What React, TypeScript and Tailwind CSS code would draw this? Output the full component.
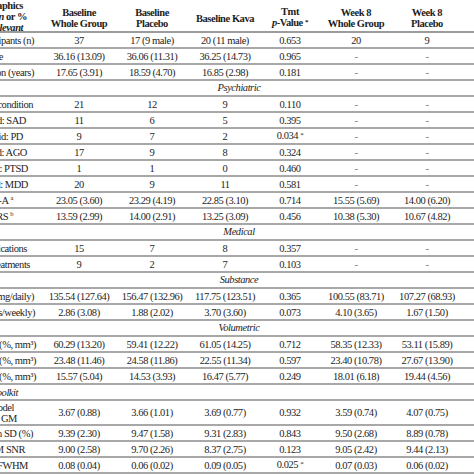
import React from "react";

type Row =
  | { kind: "data"; label: string; sup?: string; end: number; v: string[]; tall?: boolean; label2?: string; end2?: number }
  | { kind: "section"; title: string }
  | { kind: "leftsection"; title: string; end: number };

const rows: Row[] = [
  { kind: "data", label: "Participants (n)", end: 34, v: ["37", "17 (9 male)", "20 (11 male)", "0.653", "20", "9"] },
  { kind: "data", label: "Age", end: 3, v: ["36.16 (13.09)", "36.06 (11.31)", "36.25 (14.73)", "0.965", "-", "-"] },
  { kind: "data", label: "Education (years)", end: 34, v: ["17.65 (3.91)", "18.59 (4.70)", "16.85 (2.98)", "0.181", "-", "-"] },
  { kind: "section", title: "Psychiatric" },
  { kind: "data", label: "Comorbid condition", end: 33, v: ["21", "12", "9", "0.110", "-", "-"] },
  { kind: "data", label: "Comorbid: SAD", end: 26, v: ["11", "6", "5", "0.395", "-", "-"] },
  { kind: "data", label: "Comorbid: PD", end: 23, v: ["9", "7", "2", "0.034 *", "-", "-"] },
  { kind: "data", label: "Comorbid: AGO", end: 27, v: ["17", "9", "8", "0.324", "-", "-"] },
  { kind: "data", label: "Comorbid: PTSD", end: 28, v: ["1", "1", "0", "0.460", "-", "-"] },
  { kind: "data", label: "Comorbid: MDD", end: 28, v: ["20", "9", "11", "0.581", "-", "-"] },
  { kind: "data", label: "HAM-A", sup: "a", end: 13, v: ["23.05 (3.60)", "23.29 (4.19)", "22.85 (3.10)", "0.714", "15.55 (5.69)", "14.00 (6.20)"] },
  { kind: "data", label: "MADRS", sup: "b", end: 13, v: ["13.59 (2.99)", "14.00 (2.91)", "13.25 (3.09)", "0.456", "10.38 (5.30)", "10.67 (4.82)"] },
  { kind: "section", title: "Medical" },
  { kind: "data", label: "Medications", end: 27, v: ["15", "7", "8", "0.357", "-", "-"] },
  { kind: "data", label: "Treatments", end: 30, v: ["9", "2", "7", "0.103", "-", "-"] },
  { kind: "section", title: "Substance" },
  { kind: "data", label: "Caffeine (mg/daily)", end: 34, v: ["135.54 (127.64)", "156.47 (132.96)", "117.75 (123.51)", "0.365", "100.55 (83.71)", "107.27 (68.93)"] },
  { kind: "data", label: "Alcohol (units/weekly)", end: 35, v: ["2.86 (3.08)", "1.88 (2.02)", "3.70 (3.60)", "0.073", "4.10 (3.65)", "1.67 (1.50)"] },
  { kind: "section", title: "Volumetric" },
  { kind: "data", label: "GM (%, mm³)", end: 36, v: ["60.29 (13.20)", "59.41 (12.22)", "61.05 (14.25)", "0.712", "58.35 (12.33)", "53.11 (15.89)"] },
  { kind: "data", label: "WM (%, mm³)", end: 36, v: ["23.48 (11.46)", "24.58 (11.86)", "22.55 (11.34)", "0.597", "23.40 (10.78)", "27.67 (13.90)"] },
  { kind: "data", label: "CSF (%, mm³)", end: 36, v: ["15.57 (5.04)", "14.53 (3.93)", "16.47 (5.77)", "0.249", "18.01 (6.18)", "19.44 (4.56)"] },
  { kind: "leftsection", title: "MRIQC Toolkit", end: 18 },
  { kind: "data", label: "Noise Model", label2: "in GM", end: 14, end2: 17, tall: true, v: ["3.67 (0.88)", "3.66 (1.01)", "3.69 (0.77)", "0.932", "3.59 (0.74)", "4.07 (0.75)"] },
  { kind: "data", label: "Motion SD (%)", end: 33, v: ["9.39 (2.30)", "9.47 (1.58)", "9.31 (2.83)", "0.843", "9.50 (2.68)", "8.89 (0.78)"] },
  { kind: "data", label: "WM SNR", end: 25, v: ["9.00 (2.58)", "9.70 (2.26)", "8.37 (2.75)", "0.123", "9.05 (2.42)", "9.44 (2.13)"] },
  { kind: "data", label: "GM FWHM", end: 28, v: ["0.08 (0.04)", "0.06 (0.02)", "0.09 (0.05)", "0.025 *", "0.07 (0.03)", "0.06 (0.02)"] },
];

const LABEL_W = 42;
const grid = "grid grid-cols-[42px_74px_72px_74px_56px_76px_66px_100px] w-[560px]";

function Val({ s }: { s: string }) {
  if (s === "-") return <span className="text-[#777]">-</span>;
  if (s.endsWith(" *")) {
    return (
      <span>
        {s.slice(0, -2)}
        <span className="relative top-[-2px] text-[7px] ml-[2px]">*</span>
      </span>
    );
  }
  return <span>{s}</span>;
}

function EndLine({ end, children, className = "" }: { end: number; children: React.ReactNode; className?: string }) {
  return (
    <div className={`flex justify-end whitespace-nowrap ${className}`} style={{ paddingRight: LABEL_W - end }}>
      <span className="shrink-0">{children}</span>
    </div>
  );
}

export default function App() {
  return (
    <div
      className="w-[474px] h-[474px] overflow-hidden bg-white text-[#1e1e1e] text-[10.5px] tracking-[-0.45px]"
      style={{ fontFamily: '"Liberation Serif", "Times New Roman", serif' }}
    >
      {/* header */}
      <div className={`${grid} h-[33px] border-b-2 border-[#9c9c9c] font-bold leading-[11px]`}>
        <div className="flex flex-col justify-center pb-[3px]">
          <EndLine end={23}>Demographics</EndLine>
          <EndLine end={27}>
            (SD), <i>n</i> or %
          </EndLine>
          <EndLine end={23}>
            <i>if Relevant</i>
          </EndLine>
        </div>
        <div className="flex flex-col items-center justify-center text-center">
          <div>Baseline</div>
          <div>Whole Group</div>
        </div>
        <div className="flex flex-col items-center justify-center text-center">
          <div>Baseline</div>
          <div>Placebo</div>
        </div>
        <div className="flex items-center justify-center text-center whitespace-nowrap">Baseline Kava</div>
        <div className="flex flex-col items-center justify-center text-center whitespace-nowrap">
          <div>Tmt</div>
          <div>
            <i>p</i>-Value <span className="relative top-[-2px] text-[7px]">*</span>
          </div>
        </div>
        <div className="flex flex-col items-center justify-center text-center whitespace-nowrap">
          <div>Week 8</div>
          <div>Whole Group</div>
        </div>
        <div className="flex flex-col items-center justify-center text-center">
          <div>Week 8</div>
          <div>Placebo</div>
        </div>
        <div />
      </div>

      {rows.map((r, i) => {
        if (r.kind === "section") {
          return (
            <div key={i} className="h-[16px] border-b-2 border-[#a8a8a8] w-[560px] flex items-center">
              <div className="w-[478px] flex justify-center italic">{r.title}</div>
            </div>
          );
        }
        if (r.kind === "leftsection") {
          return (
            <div key={i} className={`${grid} h-[16px] border-b-2 border-[#a8a8a8]`}>
              <div className="flex flex-col justify-center italic">
                <EndLine end={r.end}>{r.title}</EndLine>
              </div>
            </div>
          );
        }
        return (
          <div key={i} className={`${grid} ${r.tall ? "h-[25px]" : "h-[16px]"} border-b-2 border-[#a8a8a8] leading-[11px]`}>
            <div className="flex flex-col justify-center">
              <EndLine end={r.end}>
                {r.label}
                {r.sup && <sup className="text-[6.5px] ml-[2px]">{r.sup}</sup>}
              </EndLine>
              {r.label2 && <EndLine end={r.end2 ?? 0}>{r.label2}</EndLine>}
            </div>
            {r.v.map((s, j) => (
              <div key={j} className="flex items-center justify-center whitespace-nowrap">
                <Val s={s} />
              </div>
            ))}
            <div />
          </div>
        );
      })}
    </div>
  );
}
